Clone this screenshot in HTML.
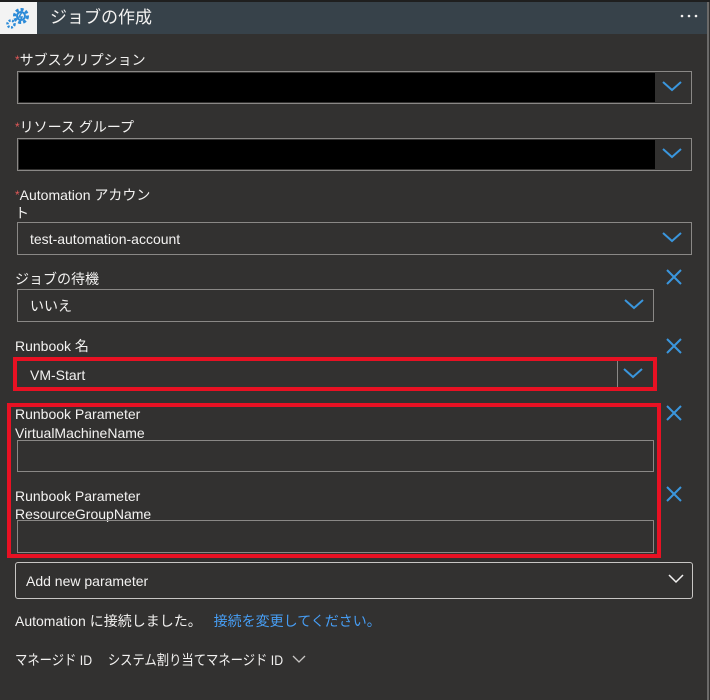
<!DOCTYPE html>
<html><head><meta charset="utf-8"><style>
*{margin:0;padding:0;box-sizing:border-box}
body{width:710px;height:700px;background:#323130;position:relative;overflow:hidden;font-family:"Liberation Sans","Noto Sans CJK JP",sans-serif;color:#f3f2f1;font-size:14px}
.a{position:absolute}
.lbl{position:absolute;font-size:14px;line-height:18px;color:#f3f2f1;white-space:nowrap}
.req{color:#e05858;font-size:12px;vertical-align:top}
.fld{position:absolute;border:1px solid #8a8886;height:33px}
.blk{position:absolute;background:#000}
.txt{position:absolute;font-size:14px;line-height:18px;white-space:nowrap}
.red{position:absolute;border:4px solid #e81123}
svg{position:absolute}
</style></head><body>
<div class="a" style="left:0;top:0;width:710px;height:2px;background:#1f1f1f"></div>
<div class="a" style="left:0;top:2px;width:708px;height:32px;background:#37424a"></div>
<div class="a" style="left:0;top:2px;width:37px;height:32px;background:#f3f3f3"></div>
<svg style="left:5px;top:6px" width="28" height="24" viewBox="0 0 28 24"><circle cx="16" cy="10" r="6.5" fill="none" stroke="#2c8bd8" stroke-width="3" stroke-dasharray="3 2"/><circle cx="16" cy="10" r="4" fill="none" stroke="#2c8bd8" stroke-width="2"/><path d="M17 6l-3 5h3l-2 4" stroke="#2c8bd8" stroke-width="1.5" fill="none"/><circle cx="6" cy="18" r="3.5" fill="none" stroke="#2c8bd8" stroke-width="2.5" stroke-dasharray="2 1.5"/></svg>
<div class="txt" style="left:50px;top:7px;font-size:17px;line-height:22px;color:#f3f2f1">ジョブの作成</div>
<svg style="left:680px;top:13px" width="20" height="6"><circle cx="2" cy="3" r="1.3" fill="#f3f2f1"/><circle cx="9" cy="3" r="1.3" fill="#f3f2f1"/><circle cx="16" cy="3" r="1.3" fill="#f3f2f1"/></svg>
<div class="a" style="left:707px;top:2px;width:2px;height:698px;background:#6b6a69"></div>

<div class="lbl" style="left:15px;top:51px"><span class="req">*</span>サブスクリプション</div>
<div class="fld" style="left:17px;top:71px;width:675px"></div>
<div class="blk" style="left:19px;top:73px;width:636px;height:29px"></div>

<div class="lbl" style="left:15px;top:118px"><span class="req">*</span>リソース グループ</div>
<div class="fld" style="left:17px;top:138px;width:675px"></div>
<div class="blk" style="left:19px;top:140px;width:636px;height:29px"></div>

<div class="lbl" style="left:15px;top:186px"><span class="req">*</span>Automation アカウン</div>
<div class="lbl" style="left:15px;top:204px">ト</div>
<div class="fld" style="left:17px;top:222px;width:675px"></div>
<div class="txt" style="left:30px;top:230px">test-automation-account</div>

<div class="lbl" style="left:15px;top:270px">ジョブの待機</div>
<div class="fld" style="left:17px;top:289px;width:637px"></div>
<div class="txt" style="left:30px;top:297px">いいえ</div>

<div class="lbl" style="left:15px;top:337px">Runbook 名</div>
<div class="red" style="left:13px;top:357px;width:644px;height:34px"></div>
<div class="a" style="left:617px;top:361px;width:1px;height:26px;background:#8a8886"></div>
<div class="txt" style="left:30px;top:366px">VM-Start</div>

<div class="red" style="left:7px;top:403px;width:654px;height:155px"></div>
<div class="lbl" style="left:15px;top:405px">Runbook Parameter</div>
<div class="lbl" style="left:15px;top:424px">VirtualMachineName</div>
<div class="fld" style="left:17px;top:440px;width:637px;height:32px"></div>
<div class="lbl" style="left:15px;top:487px">Runbook Parameter</div>
<div class="lbl" style="left:15px;top:505px">ResourceGroupName</div>
<div class="fld" style="left:17px;top:520px;width:637px;height:33px"></div>

<div class="a" style="left:15px;top:562px;width:678px;height:37px;border:1px solid #c8c6c4;border-radius:3px"></div>
<div class="txt" style="left:26px;top:572px">Add new parameter</div>

<div class="txt" style="left:15px;top:612px">Automation に接続しました。 <span style="color:#479ef5;margin-left:8px">接続を変更してください。</span></div>
<div class="txt" style="left:15px;top:651px;transform:scaleX(0.88);transform-origin:0 0">マネージド ID　 システム割り当てマネージド ID</div>
<svg style="left:292px;top:655px" width="14" height="8"><path d="M1 1l6 6 6-6" stroke="#c8c6c4" stroke-width="1.3" fill="none"/></svg>

<svg width="710" height="700" style="left:0;top:0" fill="none" stroke="#3a96dd" stroke-width="2">
<path d="M663 82l9 8 9-8M663 149l9 8 9-8M663 233l9 8 9-8M625 300l9 8 9-8M624 369l9 8 9-8"/>
<path d="M667 270l14 14M681 270l-14 14M667 339l14 14M681 339l-14 14M667 406l14 14M681 406l-14 14M667 487l14 14M681 487l-14 14"/>
<path d="M669 575l7 7 7-7" stroke="#f3f2f1" stroke-width="1.5"/>
</svg>
</body></html>
